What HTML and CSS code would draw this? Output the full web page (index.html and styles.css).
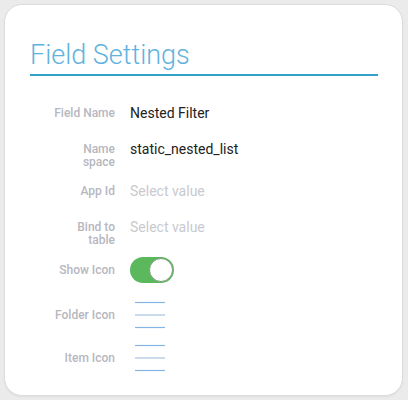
FILE: index.html
```html
<!DOCTYPE html>
<html>
<head>
<meta charset="utf-8">
<link rel="stylesheet" href="styles.css">
</head>
<body>
<div class="card">
  <h1 class="title">Field Settings</h1>
  <div class="rows">
    <div class="row">
      <div class="label">Field Name</div>
      <div class="value">Nested Filter</div>
    </div>
    <div class="row">
      <div class="label">Name<br>space</div>
      <div class="value">static_nested_list</div>
    </div>
    <div class="row">
      <div class="label">App Id</div>
      <div class="value placeholder">Select value</div>
    </div>
    <div class="row">
      <div class="label">Bind to<br>table</div>
      <div class="value placeholder">Select value</div>
    </div>
    <div class="row row-center row-toggle">
      <div class="label">Show Icon</div>
      <div class="toggle"><span class="knob"></span></div>
    </div>
    <div class="row row-center row-folder">
      <div class="label">Folder Icon</div>
      <svg class="menu" width="30" height="28" viewBox="0 0 30 28">
        <line x1="0" y1="1.5" x2="30" y2="1.5" class="l1"/>
        <line x1="0" y1="14" x2="30" y2="14" class="l2"/>
        <line x1="0" y1="26.5" x2="30" y2="26.5" class="l1"/>
      </svg>
    </div>
    <div class="row row-center row-item">
      <div class="label">Item Icon</div>
      <svg class="menu" width="30" height="28" viewBox="0 0 30 28">
        <line x1="0" y1="1.5" x2="30" y2="1.5" class="l1"/>
        <line x1="0" y1="14" x2="30" y2="14" class="l2"/>
        <line x1="0" y1="26.5" x2="30" y2="26.5" class="l1"/>
      </svg>
    </div>
  </div>
</div>
</body>
</html>
```

FILE: styles.css
```css
html, body {
  margin: 0;
  padding: 0;
  background: #ebebeb;
}
body {
  padding: 4px 5px 4px 4px;
  font-family: Roboto, "Liberation Sans", sans-serif;
}
.card {
  box-sizing: border-box;
  width: 399px;
  height: 392px;
  background: #ffffff;
  border: 1px solid #dcdcdc;
  border-radius: 18px;
  padding: 34px 24px 0 25px;
  box-shadow: 0 1px 2px rgba(0,0,0,0.06);
}
.title {
  margin: 0;
  font-size: 27px;
  font-weight: 300;
  line-height: 32px;
  color: #62b2de;
  padding-bottom: 3px;
  border-bottom: 2px solid #33a1c9;
}
.rows {
  display: flex;
  flex-direction: column;
  gap: 16px;
  margin-top: 27px;
}
.row {
  display: flex;
  align-items: flex-start;
  gap: 15px;
}
.label {
  width: 85px;
  flex: none;
  text-align: right;
  font-size: 12px;
  font-weight: 500;
  line-height: 13px;
  color: #b7b7bf;
  padding-top: 4px;
  margin-bottom: -4px;
}
.value {
  font-size: 14px;
  line-height: 20px;
  color: #212121;
}
.placeholder {
  color: #c9c9ce;
}
.row-center {
  align-items: center;
}
.row-center .label {
  padding-top: 0;
  margin-bottom: 0;
}
.row-toggle {
  margin-top: -2px;
}
.row-folder {
  margin-top: 2px;
}
.row-item {
  margin-top: -1px;
}
.toggle {
  width: 44px;
  height: 26px;
  border-radius: 13px;
  background: #5cb85c;
  position: relative;
  flex: none;
}
.knob {
  position: absolute;
  top: 1px;
  right: 1px;
  width: 22px;
  height: 22px;
  border-radius: 50%;
  background: #ffffff;
  border: 1px solid #7a9a7a;
}
.menu {
  display: block;
  margin-left: 5px;
}
.menu line {
  stroke-width: 1.2;
}
.menu .l1 {
  stroke: #85b4e6;
}
.menu .l2 {
  stroke: #a9c2e2;
}
```
